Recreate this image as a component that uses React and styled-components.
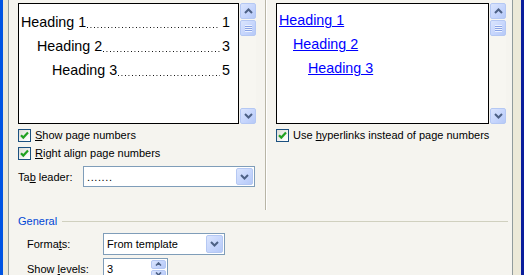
import React from "react";
import styled, { createGlobalStyle } from "styled-components";

const GlobalStyle = createGlobalStyle`
  html, body {
    margin: 0;
    padding: 0;
    overflow: hidden;
  }
  body {
    font-family: "Liberation Sans", Arial, sans-serif;
    font-size: 11px;
    color: #000;
  }
`;

const Window = styled.div`
  width: 524px;
  height: 275px;
  box-sizing: border-box;
  display: flex;
  overflow: hidden;
  background: #ece9d8;
  border-left: 3px solid #0054e3;
  border-right: 3px solid #0a1d9c;
  padding: 0 8px 0 5px;
`;

const TabPage = styled.div`
  flex: 1;
  background: #f5f4ef;
  border-left: 1px solid #919b9c;
  border-right: 1px solid #919b9c;
  padding-left: 9px;
  display: flex;
  flex-direction: column;
`;

const TopSection = styled.div`
  display: flex;
  height: 210px;
  flex-shrink: 0;
`;

const Column = styled.div`
  width: ${(p) => p.$width}px;
  padding-top: 3px;
  display: flex;
  flex-direction: column;
`;

const Separator = styled.div`
  width: 1px;
  margin: 0 9px;
  background: #b8b5a6;
  border-right: 1px solid #fff;
`;

const PreviewRow = styled.div`
  display: flex;
  gap: 1px;
  height: 121px;
`;

const PreviewBox = styled.div`
  flex: 1;
  background: #fff;
  border: 1px solid #000;
  padding: ${(p) => p.$pad};
  font-size: 14.3px;
  overflow: hidden;
`;

const TocLine = styled.div`
  display: flex;
  height: 24px;
  line-height: 24px;
  padding-left: ${(p) => p.$indent}px;
  white-space: nowrap;
`;

/* dotted tab leader drawn as a repeating dot along the baseline */
const Leader = styled.span`
  flex: 1;
  margin: 0 2px 0 1px;
  background-image: linear-gradient(to right, #000 1px, transparent 1px);
  background-size: 3.5px 1px;
  background-repeat: repeat-x;
  background-position: 0 17px;
`;

const LinkLine = styled.div`
  height: 24px;
  line-height: 24px;
  padding-left: ${(p) => p.$indent}px;
  white-space: nowrap;
  color: #0000ff;
  text-decoration: underline;
`;

const ScrollBar = styled.div`
  width: 16px;
  display: flex;
  flex-direction: column;
  background: #f7f6f1;
`;

const ScrollButton = styled.div`
  height: 16px;
  box-sizing: border-box;
  border: 1px solid #b5c8f3;
  border-radius: 2px;
  background: linear-gradient(135deg, #dbe5fd 0%, #c4d4fc 60%, #b6c9f7 100%);
  display: flex;
  align-items: center;
  justify-content: center;
  margin-top: ${(p) => p.$mt || 0}px;
`;

const Grip = styled.div`
  width: 7px;
  height: 7px;
  background: repeating-linear-gradient(
    to bottom,
    #eef3fe 0,
    #eef3fe 1px,
    #8aa3e4 1px,
    #8aa3e4 2px
  );
`;

const Track = styled.div`
  flex: 1;
`;

const CheckRow = styled.label`
  display: flex;
  align-items: center;
  gap: 4px;
  height: 18px;
  margin-top: ${(p) => p.$mt || 0}px;
`;

const Box = styled.span`
  width: 13px;
  height: 13px;
  box-sizing: border-box;
  border: 1px solid #1c5180;
  background: linear-gradient(135deg, #dcdcd6 0%, #ffffff 90%);
  display: flex;
  align-items: center;
  justify-content: center;
  flex-shrink: 0;
`;

const Key = styled.span`
  text-decoration: underline;
`;

const FieldRow = styled.div`
  display: flex;
  align-items: center;
  margin-top: ${(p) => p.$mt || 0}px;
  padding-left: ${(p) => p.$indent || 0}px;
`;

const FieldLabel = styled.span`
  width: ${(p) => p.$width}px;
  flex-shrink: 0;
`;

const Combo = styled.div`
  width: ${(p) => p.$width}px;
  height: ${(p) => p.$height}px;
  box-sizing: border-box;
  border: 1px solid #7f9db9;
  background: #fff;
  display: flex;
  align-items: center;
  padding: 1px;
  flex-shrink: 0;
`;

const ComboText = styled.span`
  flex: 1;
  padding-left: 2px;
  letter-spacing: ${(p) => p.$spacing || 0}px;
`;

const DropButton = styled.div`
  width: 17px;
  align-self: stretch;
  box-sizing: border-box;
  border: 1px solid #b5c8f3;
  border-radius: 2px;
  background: linear-gradient(135deg, #dbe5fd 0%, #c4d4fc 60%, #b6c9f7 100%);
  display: flex;
  align-items: center;
  justify-content: center;
`;

const SpinButtons = styled.div`
  width: 15px;
  align-self: stretch;
  display: flex;
  flex-direction: column;
  gap: 1px;
`;

const SpinHalf = styled(DropButton)`
  width: 15px;
  flex: 1;
`;

const GroupHeading = styled.div`
  display: flex;
  align-items: center;
  gap: 5px;
  height: 14px;
  margin-top: 5px;
  margin-right: 4px;
  color: #0046d5;
`;

const GroupLine = styled.div`
  flex: 1;
  height: 1px;
  background: #d0d0bf;
`;

const Up = () => (
  <svg width="9" height="6" viewBox="0 0 9 6">
    <path d="M1 5 L4.5 1.5 L8 5" fill="none" stroke="#4d6185" strokeWidth="2" />
  </svg>
);

const Down = () => (
  <svg width="9" height="6" viewBox="0 0 9 6">
    <path d="M1 1 L4.5 4.5 L8 1" fill="none" stroke="#4d6185" strokeWidth="2" />
  </svg>
);

const SmallUp = () => (
  <svg width="7" height="4" viewBox="0 0 7 4">
    <path d="M1 3.5 L3.5 1 L6 3.5" fill="none" stroke="#4d6185" strokeWidth="1.6" />
  </svg>
);

const SmallDown = () => (
  <svg width="7" height="4" viewBox="0 0 7 4">
    <path d="M1 0.5 L3.5 3 L6 0.5" fill="none" stroke="#4d6185" strokeWidth="1.6" />
  </svg>
);

const Check = () => (
  <svg width="9" height="9" viewBox="0 0 9 9">
    <path d="M1 4.2 L3.3 6.6 L8 1.6" fill="none" stroke="#21a121" strokeWidth="2.2" />
  </svg>
);

const Scroller = () => (
  <ScrollBar>
    <ScrollButton>
      <Up />
    </ScrollButton>
    <ScrollButton $mt={1}>
      <Grip />
    </ScrollButton>
    <Track />
    <ScrollButton>
      <Down />
    </ScrollButton>
  </ScrollBar>
);

const Checkbox = ({ children, mt }) => (
  <CheckRow $mt={mt}>
    <Box>
      <Check />
    </Box>
    <span>{children}</span>
  </CheckRow>
);

const toc = [
  { title: "Heading 1", page: 1, indent: 0 },
  { title: "Heading 2", page: 3, indent: 16 },
  { title: "Heading 3", page: 5, indent: 31 },
];

export default function App() {
  return (
    <>
      <GlobalStyle />
      <Window>
        <TabPage>
          <TopSection>
            <Column $width={238}>
              <PreviewRow>
                <PreviewBox $pad="6px 8px 0 2px">
                  {toc.map((t) => (
                    <TocLine key={t.title} $indent={t.indent}>
                      <span>{t.title}</span>
                      <Leader />
                      <span>{t.page}</span>
                    </TocLine>
                  ))}
                </PreviewBox>
                <Scroller />
              </PreviewRow>
              <Checkbox mt={2}>
                <Key>S</Key>how page numbers
              </Checkbox>
              <Checkbox>
                <Key>R</Key>ight align page numbers
              </Checkbox>
              <FieldRow $mt={4}>
                <FieldLabel $width={65}>
                  Ta<Key>b</Key> leader:
                </FieldLabel>
                <Combo $width={172} $height={21}>
                  <ComboText $spacing={0.6}>.......</ComboText>
                  <DropButton>
                    <Down />
                  </DropButton>
                </Combo>
              </FieldRow>
            </Column>
            <Separator />
            <Column $width={230}>
              <PreviewRow>
                <PreviewBox $pad="4px 4px 0 2px">
                  {toc.map((t) => (
                    <LinkLine key={t.title} $indent={t.indent === 0 ? 0 : t.indent - 2}>
                      {t.title}
                    </LinkLine>
                  ))}
                </PreviewBox>
                <Scroller />
              </PreviewRow>
              <Checkbox mt={2}>
                Use <Key>h</Key>yperlinks instead of page numbers
              </Checkbox>
            </Column>
          </TopSection>
          <GroupHeading>
            <span>General</span>
            <GroupLine />
          </GroupHeading>
          <FieldRow $mt={6} $indent={9}>
            <FieldLabel $width={76}>
              Forma<Key>t</Key>s:
            </FieldLabel>
            <Combo $width={122} $height={22}>
              <ComboText>From template</ComboText>
              <DropButton>
                <Down />
              </DropButton>
            </Combo>
          </FieldRow>
          <FieldRow $mt={3} $indent={9}>
            <FieldLabel $width={76}>
              Show <Key>l</Key>evels:
            </FieldLabel>
            <Combo $width={65} $height={22}>
              <ComboText>3</ComboText>
              <SpinButtons>
                <SpinHalf>
                  <SmallUp />
                </SpinHalf>
                <SpinHalf>
                  <SmallDown />
                </SpinHalf>
              </SpinButtons>
            </Combo>
          </FieldRow>
        </TabPage>
      </Window>
    </>
  );
}
